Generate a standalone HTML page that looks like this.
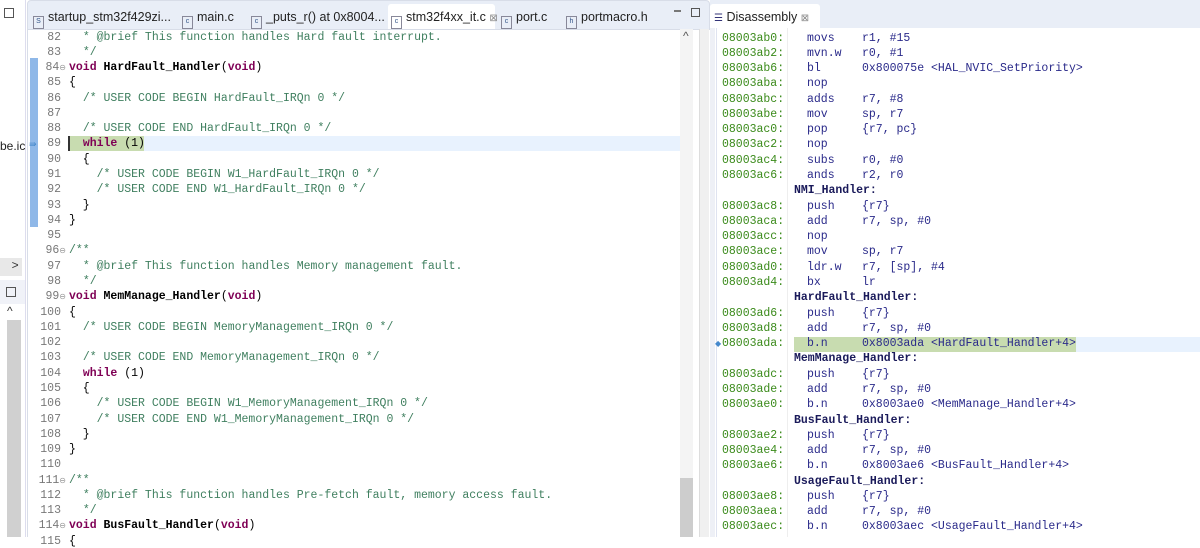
<!DOCTYPE html>
<html><head><style>
body{margin:0;width:1200px;height:537px;overflow:hidden;background:#fff;position:relative;font-family:"Liberation Sans",sans-serif;}
.a{position:absolute;}
.m{font-family:"Liberation Mono",monospace;font-size:11.5px;white-space:pre;}
.ln{position:absolute;left:28px;width:33px;text-align:right;color:#787878;}
.cd{position:absolute;left:69px;color:#000;}
.c{color:#3f7f5f}
.k{color:#7f0055;font-weight:bold}
.b{font-weight:bold}
.tab{position:absolute;top:6px;height:22px;font-size:12.5px;color:#222;line-height:22px}
.ic{display:inline-block;width:9px;height:11px;border:1px solid #889;vertical-align:-2px;margin-right:4px;font-size:7px;line-height:10px;text-align:center;color:#358}
.da{position:absolute;left:722px;color:#3a8a1a}
.dm{position:absolute;left:807px;color:#2a2a8a}
.do{position:absolute;left:862px;color:#2a2a8a}
.dl{position:absolute;left:794px;color:#1a1a5a;font-weight:bold}
</style></head><body>
<div class="a" style="left:0;top:0;width:25px;height:537px;background:#fff;border-right:1px solid #dde"></div>
<div class="a" style="left:4px;top:8px;width:8px;height:8px;border:1px solid #555"></div>
<div class="a" style="left:0;top:139px;font-size:12px;color:#222">be.ic</div>
<div class="a" style="left:0;top:258px;width:22px;height:18px;background:#e8e8e8;font-size:12px;color:#333;text-align:right">&gt;&nbsp;</div>
<div class="a" style="left:0;top:280px;width:25px;height:24px;background:#f0f2f8"></div>
<div class="a" style="left:6px;top:287px;width:8px;height:8px;border:1px solid #555"></div>
<div class="a" style="left:7px;top:304px;font-size:12px;color:#333">^</div>
<div class="a" style="left:7px;top:320px;width:14px;height:217px;background:#d0d0d0"></div>
<div class="a" style="left:27px;top:0;width:681px;height:28px;background:#e9eef7;border-radius:4px 4px 0 0;border:1px solid #d8dde8"></div>
<div class="a" style="left:388px;top:4px;width:107px;height:25px;background:#fff;border-radius:3px 3px 0 0"></div>
<div class="tab" style="left:33px"><span class="ic">S</span>startup_stm32f429zi...</div>
<div class="tab" style="left:182px"><span class="ic">c</span>main.c</div>
<div class="tab" style="left:251px"><span class="ic">c</span>_puts_r() at 0x8004...</div>
<div class="tab" style="left:391px"><span class="ic">c</span>stm32f4xx_it.c <span style="color:#888;font-size:10px">⊠</span></div>
<div class="tab" style="left:501px"><span class="ic">c</span>port.c</div>
<div class="tab" style="left:566px"><span class="ic">h</span>portmacro.h</div>
<div class="a" style="left:674px;top:10px;width:7px;height:2px;background:#777"></div>
<div class="a" style="left:691px;top:8px;width:7px;height:7px;border:1px solid #555"></div>
<div class="a" style="left:27px;top:29px;width:1px;height:508px;background:#d8dde8"></div>
<div class="a" style="left:699px;top:29px;width:9px;height:508px;background:#f0f0f0;border-left:1px solid #ddd"></div>
<div class="a" style="left:680px;top:29px;width:13px;height:508px;background:#f4f4f4"></div>
<div class="a" style="left:683px;top:29px;font-size:12px;color:#555">^</div>
<div class="a" style="left:680px;top:478px;width:13px;height:59px;background:#cdcdcd"></div>
<div class="a" style="left:30px;top:58px;width:8px;height:169px;background:#8fb8e8"></div>
<div class="a" style="left:68px;top:136px;width:612px;height:15px;background:#e8f2fe"></div>
<div class="a" style="left:68px;top:136px;width:76px;height:15px;background:#c8dcb0"></div>
<div class="a" style="left:68px;top:136px;width:2px;height:15px;background:#333"></div>
<div class="a" style="left:29px;top:139px;font-size:9px;color:#48c">⇛</div>
<div class="m" id="ed"></div>
<div class="a" style="left:710px;top:0;width:490px;height:537px;background:#fff"></div>
<div class="a" style="left:710px;top:0;width:490px;height:28px;background:#e9eef7"></div>
<div class="a" style="left:710px;top:4px;width:110px;height:25px;background:#fff;border-radius:3px 3px 0 0"></div>
<div class="tab" style="left:714px"><span style="color:#337;font-size:10px">☰</span> Disassembly <span style="color:#888;font-size:10px">⊠</span></div>
<div class="a" style="left:710px;top:28px;width:5px;height:509px;background:#eef0f6"></div>
<div class="a" style="left:716px;top:28px;width:1px;height:509px;background:#dfe3f0"></div>
<div class="a" style="left:787px;top:28px;width:1px;height:509px;background:#eee"></div>
<div class="a" style="left:794px;top:337px;width:282px;height:15px;background:#c8dcb0"></div>
<div class="a" style="left:1076px;top:337px;width:124px;height:15px;background:#e8f2fe"></div>
<div class="a" style="left:715px;top:339px;font-size:8px;color:#48c">◆</div>
<div class="m" id="dis"></div>
<script>
var L=[
[82,'  <span class=c>* @brief This function handles Hard fault interrupt.</span>'],
[83,'  <span class=c>*/</span>'],
['84⊖','<span class=k>void</span> <span class=b>HardFault_Handler</span>(<span class=k>void</span>)'],
[85,'{'],
[86,'  <span class=c>/* USER CODE BEGIN HardFault_IRQn 0 */</span>'],
[87,''],
[88,'  <span class=c>/* USER CODE END HardFault_IRQn 0 */</span>'],
[89,'  <span class=k>while</span> (1)'],
[90,'  {'],
[91,'    <span class=c>/* USER CODE BEGIN W1_HardFault_IRQn 0 */</span>'],
[92,'    <span class=c>/* USER CODE END W1_HardFault_IRQn 0 */</span>'],
[93,'  }'],
[94,'}'],
[95,''],
['96⊖','<span class=c>/**</span>'],
[97,'  <span class=c>* @brief This function handles Memory management fault.</span>'],
[98,'  <span class=c>*/</span>'],
['99⊖','<span class=k>void</span> <span class=b>MemManage_Handler</span>(<span class=k>void</span>)'],
[100,'{'],
[101,'  <span class=c>/* USER CODE BEGIN MemoryManagement_IRQn 0 */</span>'],
[102,''],
[103,'  <span class=c>/* USER CODE END MemoryManagement_IRQn 0 */</span>'],
[104,'  <span class=k>while</span> (1)'],
[105,'  {'],
[106,'    <span class=c>/* USER CODE BEGIN W1_MemoryManagement_IRQn 0 */</span>'],
[107,'    <span class=c>/* USER CODE END W1_MemoryManagement_IRQn 0 */</span>'],
[108,'  }'],
[109,'}'],
[110,''],
['111⊖','<span class=c>/**</span>'],
[112,'  <span class=c>* @brief This function handles Pre-fetch fault, memory access fault.</span>'],
[113,'  <span class=c>*/</span>'],
['114⊖','<span class=k>void</span> <span class=b>BusFault_Handler</span>(<span class=k>void</span>)'],
[115,'{']];
var h='';L.forEach(function(r,i){var y=30.5+i*15.28;var n=String(r[0]);var w=n.indexOf('⊖')>=0;
h+='<div class=ln style="top:'+y+'px;'+(w?'width:38px':'')+'">'+n.replace('⊖','<span style="font-size:8px;color:#999">⊖</span>')+'</div><div class=cd style="top:'+y+'px">'+r[1]+'</div>';});
document.getElementById('ed').innerHTML=h;
var D=[['08003ab0:','movs','r1, #15'],['08003ab2:','mvn.w','r0, #1'],['08003ab6:','bl','0x800075e &lt;HAL_NVIC_SetPriority&gt;'],['08003aba:','nop',''],['08003abc:','adds','r7, #8'],['08003abe:','mov','sp, r7'],['08003ac0:','pop','{r7, pc}'],['08003ac2:','nop',''],['08003ac4:','subs','r0, #0'],['08003ac6:','ands','r2, r0'],['NMI_Handler:'],['08003ac8:','push','{r7}'],['08003aca:','add','r7, sp, #0'],['08003acc:','nop',''],['08003ace:','mov','sp, r7'],['08003ad0:','ldr.w','r7, [sp], #4'],['08003ad4:','bx','lr'],['HardFault_Handler:'],['08003ad6:','push','{r7}'],['08003ad8:','add','r7, sp, #0'],['08003ada:','b.n','0x8003ada &lt;HardFault_Handler+4&gt;'],['MemManage_Handler:'],['08003adc:','push','{r7}'],['08003ade:','add','r7, sp, #0'],['08003ae0:','b.n','0x8003ae0 &lt;MemManage_Handler+4&gt;'],['BusFault_Handler:'],['08003ae2:','push','{r7}'],['08003ae4:','add','r7, sp, #0'],['08003ae6:','b.n','0x8003ae6 &lt;BusFault_Handler+4&gt;'],['UsageFault_Handler:'],['08003ae8:','push','{r7}'],['08003aea:','add','r7, sp, #0'],['08003aec:','b.n','0x8003aec &lt;UsageFault_Handler+4&gt;']];
h='';D.forEach(function(r,i){var y=31.5+i*15.28;
if(r.length==1)h+='<div class=dl style="top:'+y+'px">'+r[0]+'</div>';
else h+='<div class=da style="top:'+y+'px">'+r[0]+'</div><div class=dm style="top:'+y+'px">'+r[1]+'</div><div class=do style="top:'+y+'px">'+r[2]+'</div>';});
document.getElementById('dis').innerHTML=h;
</script>
</body></html>
